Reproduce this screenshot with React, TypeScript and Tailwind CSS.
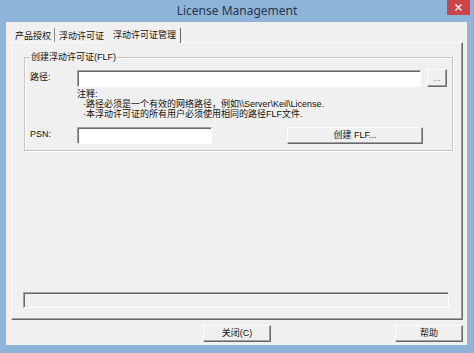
import React from 'react';

// 经典 Win 风格的凸起按钮
const Btn: React.FC<{ className?: string; children: React.ReactNode }> = ({ className = '', children }) => (
    <div
        className={`flex items-center justify-center bg-[#f0f0f0] border border-t-white border-l-white border-r-[#696969] border-b-[#696969] shadow-[inset_-1px_-1px_0_#a0a0a0] text-[9px] leading-none text-[#111] ${className}`}
    >
        {children}
    </div>
);

// 凹陷输入框
const Field: React.FC<{ className?: string }> = ({ className = '' }) => (
    <div
        className={`bg-white border border-t-[#a0a0a0] border-l-[#a0a0a0] border-r-white border-b-white shadow-[inset_1px_1px_0_#696969] ${className}`}
    />
);

export default function App() {
    return (
        <div
            className="w-[474px] h-[353px] bg-[#8fb4da] flex flex-col overflow-hidden"
            style={{ fontFamily: '"Liberation Sans", "Noto Sans CJK SC", sans-serif' }}
        >
            {/* 标题栏 */}
            <div className="h-[22px] relative flex items-center justify-center">
                <span className="text-[12px] text-[#26344d] font-['Noto_Sans',sans-serif]">License Management</span>
                <div className="absolute right-[4px] top-0 w-[23px] h-[15px] bg-[#c9444b] flex items-center justify-center">
                    <svg width="7" height="7" viewBox="0 0 7 7">
                        <path d="M0.5 0.5 L6.5 6.5 M6.5 0.5 L0.5 6.5" stroke="#fff" strokeWidth="1.4" />
                    </svg>
                </div>
            </div>

            {/* 客户区 */}
            <div className="flex-1 ml-[6px] mr-[7px] mb-[8px] bg-[#f0f0f0] flex flex-col pl-[5px] pr-[4px] pt-[6px]">
                {/* 标签页 */}
                <div className="h-[14px] flex items-stretch text-[9px] text-[#111] leading-none">
                    <div className="flex items-center pl-[4px] pr-[3px] pt-[2px] border-r border-[#8a8a8a]">产品授权</div>
                    <div className="flex items-center pl-[4px] pr-[3px] pt-[2px]">浮动许可证</div>
                    <div className="flex items-center pl-[6px] pr-[4px] border-r border-[#696969] -mb-[1px] bg-[#f0f0f0] relative">浮动许可证管理</div>
                </div>

                {/* 标签页面板 */}
                <div className="h-[278px] flex flex-col border border-t-white border-l-white border-r-[#696969] border-b-[#696969] shadow-[inset_-1px_-1px_0_#a0a0a0] pl-[12px] pr-[9px] pt-[14px]">
                    {/* 分组框 */}
                    <div className="relative h-[94px] border border-[#c4c4c4] shadow-[1px_1px_0_#fff,inset_1px_1px_0_#fff] pt-[11px] pl-[52px] pr-[4px] text-[9px] text-[#111]">
                        <span className="absolute -top-[7px] left-[5px] px-[1px] bg-[#f0f0f0] leading-[12px]">创建浮动许可证(FLF)</span>

                        <div className="flex items-center h-[18px]">
                            <span className="-ml-[47px] w-[47px]">路径:</span>
                            <Field className="w-[344px] h-[17px]" />
                            <Btn className="ml-[6px] w-[20px] h-[18px] text-[#777]">...</Btn>
                        </div>

                        <div className="mt-[2px] leading-[10px] text-[9px]">
                            <div>注释:</div>
                            <div className="pl-[6px]">·路径必须是一个有效的网络路径，例如\\Server\Keil\License.</div>
                            <div className="pl-[6px]">·本浮动许可证的所有用户必须使用相同的路径FLF文件.</div>
                        </div>

                        <div className="flex items-center h-[18px] mt-[7px]">
                            <span className="-ml-[47px] w-[47px]">PSN:</span>
                            <Field className="w-[135px] h-[17px]" />
                            <Btn className="ml-[75px] w-[136px] h-[17px]">创建 FLF...</Btn>
                        </div>
                    </div>

                    {/* 状态框 */}
                    <div className="mt-auto mb-[11px] -ml-[1px] w-[426px] h-[16px] border border-t-[#a0a0a0] border-l-[#a0a0a0] border-r-white border-b-white shadow-[inset_1px_1px_0_#696969]" />
                </div>

                {/* 底部按钮 */}
                <div className="flex items-center pt-[5px] pl-[192px]">
                    <Btn className="w-[68px] h-[17px]">关闭(C)</Btn>
                    <Btn className="ml-auto w-[68px] h-[17px]">帮助</Btn>
                </div>
            </div>
        </div>
    );
}
